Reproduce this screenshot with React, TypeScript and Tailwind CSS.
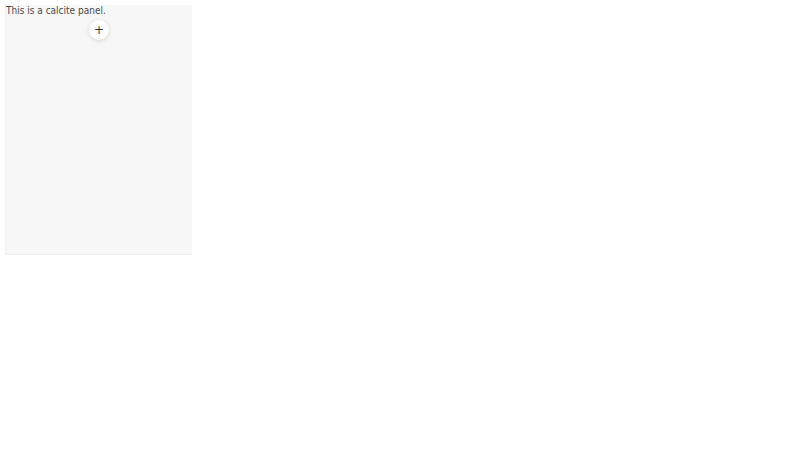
export default function App() {
  return (
    <div className="p-[5px] font-['DejaVu_Sans',sans-serif]">
      <div className="flex h-[250px] w-[187px] flex-col border-b border-l border-[#efefef] bg-[#f7f7f7]">
        <p className="h-[11px] font-['DejaVu_Sans_Condensed','DejaVu_Sans',sans-serif] text-[10px] leading-[11px] text-[#4a4a4a]">
          This is a calcite panel.
        </p>
        <div className="mt-[4px] flex justify-center">
          <button className="flex h-[20px] w-[20px] items-center justify-center rounded-full bg-white text-[12px] leading-none text-[#333] shadow-[0_1px_4px_rgba(0,0,0,0.15)]">
            +
          </button>
        </div>
      </div>
    </div>
  );
}
